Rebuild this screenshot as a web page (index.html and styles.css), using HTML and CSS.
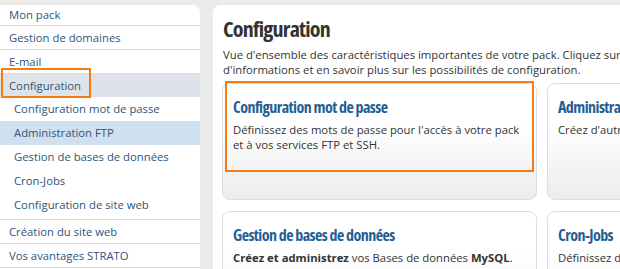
FILE: index.html
```html
<!DOCTYPE html>
<html lang="fr">
<head>
<meta charset="utf-8">
<title>Configuration</title>
<link rel="stylesheet" href="styles.css">
</head>
<body>
<div class="page">
  <nav class="sidebar">
    <a class="item first">Mon pack</a>
    <a class="item">Gestion de domaines</a>
    <a class="item">E-mail</a>
    <a class="item active">Configuration<span class="mark mark-nav"></span></a>
    <div class="sub">
      <a class="subitem">Configuration mot de passe</a>
      <a class="subitem current">Administration FTP</a>
      <a class="subitem">Gestion de bases de données</a>
      <a class="subitem">Cron-Jobs</a>
      <a class="subitem">Configuration de site web</a>
    </div>
    <a class="item">Création du site web</a>
    <a class="item">Vos avantages STRATO</a>
  </nav>
  <main class="main">
    <h1 class="title">Configuration</h1>
    <p class="intro">Vue d'ensemble des caractéristiques importantes de votre pack. Cliquez sur une catégorie pour obtenir plus<br>d'informations et en savoir plus sur les possibilités de configuration.</p>
    <div class="cards">
      <div class="card">
        <span class="mark mark-card"></span>
        <h2 class="card-title">Configuration mot de passe</h2>
        <p class="card-text">Définissez des mots de passe pour l'accès à votre pack<br>et à vos services FTP et SSH.</p>
      </div>
      <div class="card">
        <h2 class="card-title">Administration FTP</h2>
        <p class="card-text">Créez d'autres comptes FTP pour votre pack.</p>
      </div>
      <div class="card">
        <h2 class="card-title">Gestion de bases de données</h2>
        <p class="card-text"><b>Créez et administrez</b> vos Bases de données <b>MySQL</b>.</p>
      </div>
      <div class="card">
        <h2 class="card-title">Cron-Jobs</h2>
        <p class="card-text">Définissez des tâches planifiées pour l'exécution<br>de programmes et de scripts.</p>
      </div>
    </div>
  </main>
</div>
</body>
</html>
```

FILE: styles.css
```css
html, body {
  margin: 0;
  padding: 0;
  background: #ebebeb;
  overflow: hidden;
  height: 269px;
}
body {
  font-family: "Open Sans", "DejaVu Sans", sans-serif;
  font-size: 11.3px;
  color: #333;
}
.page {
  display: flex;
  gap: 13px;
  padding-top: 5px;
  width: 1000px;
}
.sidebar {
  flex: none;
  width: 200px;
  height: 300px;
  background: #fff;
  border-top-right-radius: 7px;
  display: flex;
  flex-direction: column;
}
.item {
  position: relative;
  display: block;
  padding-left: 9px;
  line-height: 23px;
  border-bottom: 1px solid #d5dde5;
  color: #2f5477;
  white-space: nowrap;
}
.item.first {
  line-height: 20px;
}
.item.active {
  background: #dee3e9;
  border-bottom: none;
}
.sub {
  padding-bottom: 2px;
  border-bottom: 1px solid #d5dde5;
}
.subitem {
  display: block;
  padding-left: 14px;
  line-height: 24px;
  color: #2f5477;
  white-space: nowrap;
}
.subitem.current {
  background: #cfe1ef;
}
.mark {
  position: absolute;
  border: 2px solid #f57c12;
  box-sizing: border-box;
  pointer-events: none;
}
.mark-nav {
  left: 1px;
  top: -6px;
  width: 90px;
  height: 30px;
}
.main {
  flex: none;
  width: 720px;
  height: 300px;
  background: #fff;
  border-top-left-radius: 8px;
  padding: 9px 0 0 10px;
  box-sizing: border-box;
}
.title {
  margin: 0;
  font-family: "Open Sans", "Liberation Sans Narrow", sans-serif;
  font-stretch: 75%;
  font-weight: 700;
  font-size: 22px;
  line-height: 28px;
  color: #333;
  letter-spacing: -0.8px;
}
.intro {
  margin: 5px 0 0;
  line-height: 15px;
  white-space: nowrap;
  color: #333;
}
.cards {
  margin: 6px 0 0 -1px;
  display: grid;
  grid-template-columns: 315px 315px;
  column-gap: 10px;
  row-gap: 11px;
}
.card {
  position: relative;
  height: 117px;
  box-sizing: border-box;
  border: 1px solid #dddddd;
  border-radius: 8px;
  background: linear-gradient(#ffffff, #ffffff 35%, #ececec);
  padding: 13px 10px 0 10px;
}
.mark-card {
  left: 2px;
  top: -3px;
  width: 309px;
  height: 91px;
}
.card-title {
  margin: 0;
  font-family: "Open Sans", "Liberation Sans Narrow", sans-serif;
  font-stretch: 75%;
  font-weight: 700;
  font-size: 16px;
  line-height: 20px;
  color: #1f5f95;
  letter-spacing: -0.55px;
}
.card-text {
  margin: 5px 0 0;
  line-height: 15px;
  white-space: nowrap;
  color: #333;
}
.card-text b {
  font-weight: 700;
}
```
